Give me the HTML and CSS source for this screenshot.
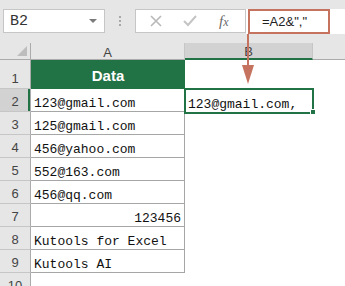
FILE: index.html
```html
<!DOCTYPE html>
<html>
  <head>
    <meta charset="utf-8">
    <title>Excel - join cell with comma</title>
    <link rel="stylesheet" href="styles.css">
  </head>
  <body>
    <div class="toolbar">
      <div class="namebox">
        <span class="namebox-text">B2</span>
        <span class="caret"></span>
      </div>
      <div class="grip">
        <span class="grip-dot"></span>
        <span class="grip-dot"></span>
        <span class="grip-dot"></span>
      </div>
      <div class="fx-tools">
        <svg class="tool-icon" width="12" height="12" viewBox="0 0 12 12">
          <path d="M1 1 L11 11 M11 1 L1 11" stroke="#b8b8b8" stroke-width="1.6" fill="none"/>
        </svg>
        <svg class="tool-icon" width="14" height="12" viewBox="0 0 14 12">
          <path d="M1 6 L5 10 L13 1" stroke="#c4c4c4" stroke-width="2" fill="none"/>
        </svg>
        <span class="fx">f<i>x</i></span>
      </div>
      <div class="formula">
        <div class="formula-mark">=A2&amp;","</div>
      </div>
    </div>

    <div class="sheet">
      <div class="col-head corner"><span class="corner-mark"></span></div>
      <div class="col-head">A</div>
      <div class="col-head selected">B</div>
      <div class="col-head rest"></div>

      <div class="row-head">1</div>
      <div class="cell data-head">Data</div>
      <div class="cell-b"></div>

      <div class="row-head selected">2</div>
      <div class="cell">123@gmail.com</div>
      <div class="cell-b active">123@gmail.com,</div>

      <div class="row-head">3</div>
      <div class="cell">125@gmail.com</div>
      <div class="cell-b"></div>

      <div class="row-head">4</div>
      <div class="cell">456@yahoo.com</div>
      <div class="cell-b"></div>

      <div class="row-head">5</div>
      <div class="cell">552@163.com</div>
      <div class="cell-b"></div>

      <div class="row-head">6</div>
      <div class="cell">456@qq.com</div>
      <div class="cell-b"></div>

      <div class="row-head">7</div>
      <div class="cell number">123456</div>
      <div class="cell-b"></div>

      <div class="row-head">8</div>
      <div class="cell">Kutools for Excel</div>
      <div class="cell-b"></div>

      <div class="row-head">9</div>
      <div class="cell">Kutools AI</div>
      <div class="cell-b"></div>

      <div class="row-head">10</div>
      <div class="cell empty"></div>
      <div class="cell-b"></div>
    </div>

    <svg class="arrow" width="14" height="50" viewBox="0 0 14 50">
      <rect x="6" y="0" width="2" height="33" fill="#c5735f"/>
      <polygon points="1,31 13,31 7,50" fill="#c5735f"/>
    </svg>
  </body>
</html>
```

FILE: styles.css
```css
html, body {
  margin: 0;
  padding: 0;
  height: 100%;
  overflow: hidden;
  background: #fff;
}

*, *:before, *:after {
  box-sizing: border-box;
}

body {
  position: relative;
  font-family: "Liberation Sans", Arial, sans-serif;
  color: #444;
}

/* formula bar */

.toolbar {
  display: flex;
  align-items: flex-start;
  height: 43px;
  padding-top: 9px;
  background: #e6e6e6;
}

.namebox {
  display: flex;
  align-items: center;
  justify-content: space-between;
  margin-left: 3px;
  width: 102px;
  height: 24px;
  padding: 0 7px 0 6px;
  background: #fff;
  border: 1px solid #c6c6c6;
}

.namebox-text {
  font-family: "Liberation Mono", monospace;
  font-size: 15px;
  color: #333;
}

.caret {
  width: 0;
  height: 0;
  border-left: 4px solid transparent;
  border-right: 4px solid transparent;
  border-top: 4px solid #7a7a7a;
}

.grip {
  display: flex;
  flex-direction: column;
  align-items: center;
  gap: 2px;
  width: 30px;
  padding-top: 7px;
}

.grip-dot {
  width: 2px;
  height: 2px;
  background: #a8a8a8;
}

.fx-tools {
  display: flex;
  align-items: center;
  width: 111px;
  height: 24px;
  padding-left: 14px;
  gap: 21px;
  background: #fff;
  border: 1px solid #c6c6c6;
}

.tool-icon {
  display: block;
}

.fx {
  margin-left: 1px;
  font-family: "Liberation Serif", serif;
  font-style: italic;
  font-size: 15px;
  color: #6a6a6a;
}

.fx i {
  font-size: 12px;
}

.formula {
  flex: 1;
  height: 25px;
  padding-left: 2px;
  background: #fff;
}

.formula-mark {
  width: 82px;
  height: 25px;
  padding-left: 12px;
  line-height: 21px;
  border: 2px solid #c5735f;
  font-size: 13px;
  color: #222;
}

/* sheet grid */

.sheet {
  display: grid;
  grid-template-columns: 31px 154px 128px 1fr;
  grid-template-rows: 17px 29px repeat(9, 23px);
}

.col-head {
  display: flex;
  align-items: center;
  justify-content: center;
  padding-top: 2px;
  background: #e6e6e6;
  border-right: 1px solid #c6c6c6;
  border-bottom: 1px solid #ababab;
  font-size: 13px;
}

.col-head.corner {
  justify-content: flex-end;
  align-items: flex-end;
  padding: 0 3px 3px 0;
  border-right-color: #ababab;
}

.corner-mark {
  width: 0;
  height: 0;
  border-left: 10px solid transparent;
  border-bottom: 10px solid #bdbdbd;
}

.col-head.selected {
  background: #d2d2d2;
  border-bottom: 2px solid #217346;
}

.col-head.rest {
  border-right: none;
}

.row-head {
  grid-column: 1;
  display: flex;
  align-items: flex-end;
  justify-content: center;
  padding-bottom: 2px;
  background: #e6e6e6;
  border-right: 1px solid #ababab;
  border-bottom: 1px solid #c6c6c6;
  font-size: 13px;
  line-height: 15px;
}

.row-head.selected {
  background: #d2d2d2;
  box-shadow: inset -2px 0 0 #217346;
}

.cell {
  display: flex;
  align-items: flex-end;
  padding-left: 3px;
  border-right: 1px solid #a6a6a6;
  border-bottom: 1px solid #a6a6a6;
  font-family: "Liberation Mono", monospace;
  font-size: 13px;
  line-height: 15px;
  color: #111;
  white-space: nowrap;
}

.cell.number {
  justify-content: flex-end;
  padding-right: 3px;
}

.cell.empty {
  border: none;
}

.cell.data-head {
  align-items: center;
  justify-content: center;
  padding: 1px 0 0 0;
  background: #217346;
  border: none;
  font-family: "Liberation Sans", Arial, sans-serif;
  font-weight: bold;
  font-size: 15px;
  color: #fff;
}

.cell-b {
  position: relative;
  display: flex;
  align-items: flex-end;
  padding-left: 3px;
  font-family: "Liberation Mono", monospace;
  font-size: 13px;
  line-height: 15px;
  color: #111;
  white-space: nowrap;
}

.cell-b.active:before {
  content: "";
  position: absolute;
  top: -1px;
  left: -1px;
  right: -1px;
  bottom: -2px;
  border: 2px solid #217346;
}

.cell-b.active:after {
  content: "";
  position: absolute;
  right: -3px;
  bottom: -3px;
  width: 6px;
  height: 6px;
  background: #217346;
  border: 1px solid #fff;
}

/* annotation arrow from formula to cell */

.arrow {
  position: absolute;
  left: 241px;
  top: 34px;
}
```
